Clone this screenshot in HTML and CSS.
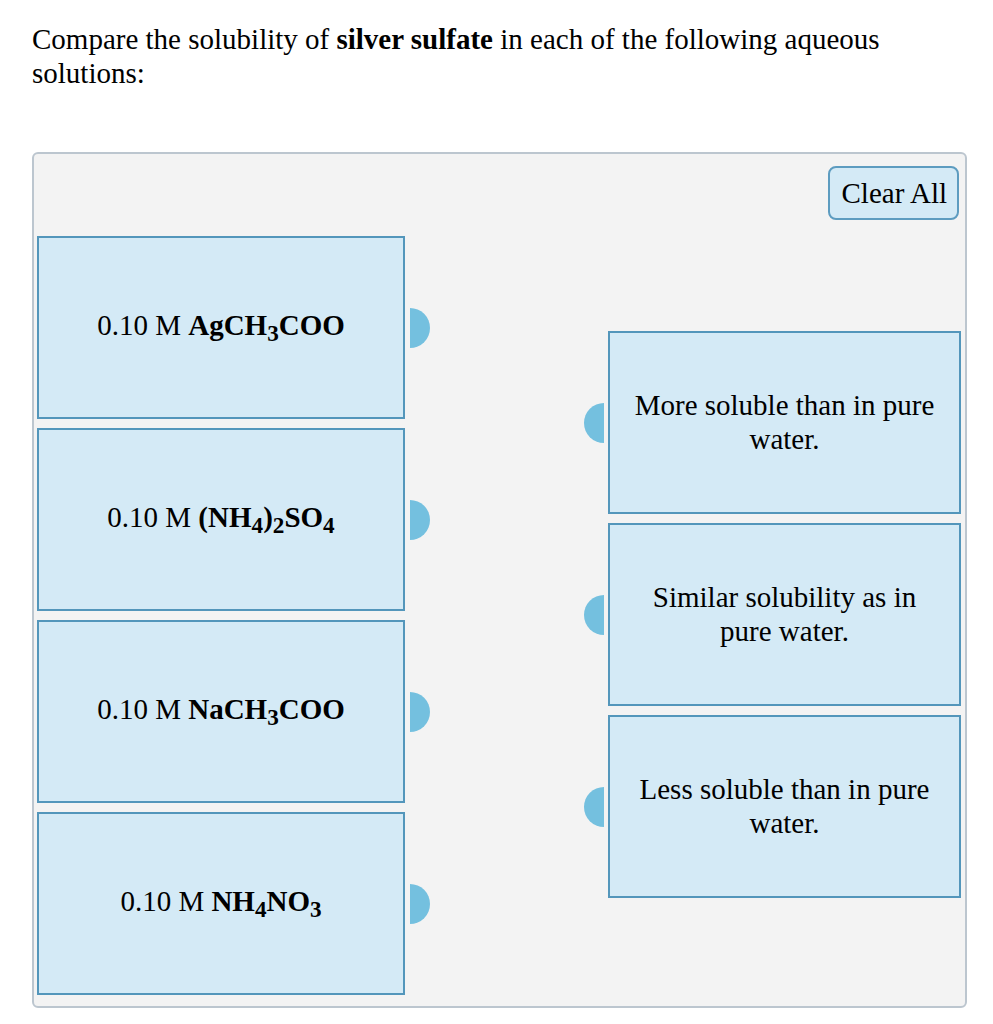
FILE: index.html
```html
<!DOCTYPE html>
<html lang="en">
<head>
<meta charset="utf-8">
<title>Silver sulfate solubility</title>
<link rel="stylesheet" href="styles.css">
</head>
<body>
<main class="page">
  <p class="prompt">Compare the solubility of <b>silver sulfate</b> in each of the following aqueous solutions:</p>

  <section class="board">
    <div class="toolbar">
      <button class="clear-btn" type="button">Clear All</button>
    </div>

    <div class="columns">
      <div class="col col-left">
        <div class="item">
          <div class="card">0.10 M&nbsp;<b>AgCH<sub>3</sub>COO</b></div>
          <span class="tab tab-right"></span>
        </div>
        <div class="item">
          <div class="card">0.10 M&nbsp;<b>(NH<sub>4</sub>)<sub>2</sub>SO<sub>4</sub></b></div>
          <span class="tab tab-right"></span>
        </div>
        <div class="item">
          <div class="card">0.10 M&nbsp;<b>NaCH<sub>3</sub>COO</b></div>
          <span class="tab tab-right"></span>
        </div>
        <div class="item">
          <div class="card">0.10 M&nbsp;<b>NH<sub>4</sub>NO<sub>3</sub></b></div>
          <span class="tab tab-right"></span>
        </div>
      </div>

      <div class="col col-right">
        <div class="item">
          <span class="tab tab-left"></span>
          <div class="card card-target">More soluble than in pure water.</div>
        </div>
        <div class="item">
          <span class="tab tab-left"></span>
          <div class="card card-target">Similar solubility as in pure water.</div>
        </div>
        <div class="item">
          <span class="tab tab-left"></span>
          <div class="card card-target">Less soluble than in pure water.</div>
        </div>
      </div>
    </div>
  </section>
</main>
</body>
</html>
```

FILE: styles.css
```css
html, body {
  margin: 0;
  padding: 0;
  background: #ffffff;
}

.page {
  padding: 22px 26px 0 32px;
  font-family: "Liberation Serif", "Times New Roman", serif;
  color: #000;
}

.prompt {
  margin: 0 0 62px 0;
  font-size: 29px;
  line-height: 34px;
  width: 880px;
}

.board {
  box-sizing: border-box;
  width: 935px;
  background: #f3f3f3;
  border: 2px solid #bcc6cf;
  border-radius: 6px;
  padding: 0 4px 11px 3px;
}

.toolbar {
  display: flex;
  justify-content: flex-end;
  padding: 12px 2px 0 0;
}

.clear-btn {
  font-family: "Liberation Serif", "Times New Roman", serif;
  font-size: 29px;
  line-height: 32px;
  color: #000;
  background: #d4eaf6;
  border: 2px solid #5d9cc0;
  border-radius: 8px;
  height: 54px;
  padding: 0 10px 0 11px;
}

.columns {
  display: flex;
  justify-content: space-between;
  margin-top: 16px;
}

.col {
  display: flex;
  flex-direction: column;
  gap: 9px;
}

.col-right {
  margin-top: 95px;
}

.item {
  display: flex;
  align-items: center;
}

.card {
  box-sizing: border-box;
  width: 368px;
  height: 183px;
  background: #d4eaf6;
  border: 2px solid #5396bb;
  display: flex;
  align-items: center;
  justify-content: center;
  text-align: center;
  font-size: 29px;
  line-height: 34px;
  padding: 0 20px 6px;
}

.card sub {
  font-size: 0.8em;
  line-height: 0;
  vertical-align: -0.25em;
}

.card-target {
  width: 353px;
  padding: 0 20px 2px;
}

.tab {
  width: 20px;
  height: 40px;
  background: #74c0df;
  flex: none;
}

.tab-right {
  margin-left: 5px;
  border-radius: 0 20px 20px 0;
}

.tab-left {
  margin-right: 4px;
  border-radius: 20px 0 0 20px;
}
```
